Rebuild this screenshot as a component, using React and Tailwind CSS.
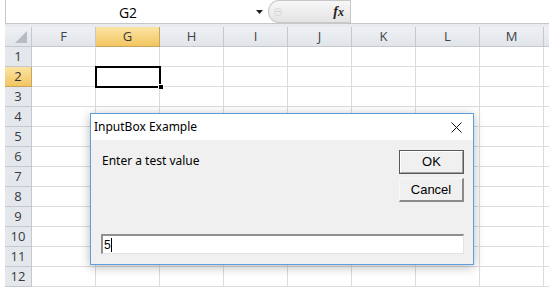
import React from "react";

const cols = ["F", "G", "H", "I", "J", "K", "L", "M", ""];
const rows = [1, 2, 3, 4, 5, 6, 7, 8, 9, 10, 11, 12];

function ColHeader({ label }) {
  const sel = label === "G";
  return (
    <div
      className={
        "w-[64px] shrink-0 h-full flex items-center justify-center border-r border-b text-[13px] " +
        (sel
          ? "bg-gradient-to-b from-[#fae4a3] to-[#f3c55f] border-[#c5a65c] text-[#3c3c3c]"
          : "bg-gradient-to-b from-[#eef0f3] to-[#e1e5ea] border-[#c5c9cf] text-[#3d434a]")
      }
    >
      {label}
    </div>
  );
}

function Row({ n }) {
  const sel = n === 2;
  return (
    <div className="flex h-[20px]">
      <div className="w-[5px] shrink-0" />
      <div
        className={
          "w-[27px] shrink-0 flex items-center justify-center border-r border-b text-[13px] " +
          (sel
            ? "bg-gradient-to-b from-[#fae4a3] to-[#f3c55f] border-[#c5a65c] text-[#333]"
            : "bg-[#e4e7eb] border-[#c5c9cf] text-[#353b42]")
        }
      >
        {n}
      </div>
      {cols.map((c, i) => (
        <div key={i} className="w-[64px] shrink-0 border-r border-b border-[#dadcdd]" />
      ))}
    </div>
  );
}

export default function App() {
  return (
    <div className="relative w-[549px] h-[289px] overflow-hidden bg-white font-['Open_Sans',sans-serif]">
      {/* top bar */}
      <div className="flex h-[23px]">
        <div className="w-[6px] shrink-0 border-r border-[#c6c6c6]" />
        <div className="w-[244px] shrink-0 flex items-center justify-center text-[14px] text-black pt-[1px]">
          G2
        </div>
        <div className="w-[18px] shrink-0 flex items-center justify-start pl-[6px]">
          <svg width="7" height="4" viewBox="0 0 7 4">
            <path d="M0 0 L7 0 L3.5 4 Z" fill="#222" />
          </svg>
        </div>
        <div className="w-[82px] shrink-0 flex items-center justify-between rounded-l-[11px] border border-r-0 border-[#c9c9c9] bg-gradient-to-b from-[#f7f7f7] to-[#e4e4e4] pl-[5px] pr-[6px]">
          <div className="w-[8px] h-[8px] rounded-full border border-[#d8d8d8] flex items-center justify-center">
            <div className="w-[4px] h-[1px] bg-[#d0d0d0]" />
          </div>
          <span className="font-['Liberation_Serif',serif] italic font-bold text-[14px] text-[#222] leading-none">
            f<span className="text-[12px]">x</span>
          </span>
        </div>
        <div className="flex-1 border-l border-[#c6c6c6]" />
      </div>
      <div className="ml-[5px] h-[1px] bg-[#c3c6ca]" />
      <div className="ml-[5px] h-[3px] bg-[#e8eaed]" />
      {/* header */}
      <div className="flex h-[20px]">
        <div className="w-[5px] shrink-0" />
        <div className="w-[27px] shrink-0 relative border-r border-b border-[#c5c9cf] bg-gradient-to-b from-[#eef0f3] to-[#e1e5ea] flex items-end justify-end pr-[4px] pb-[3px]">
          <svg width="12" height="12" viewBox="0 0 12 12">
            <path d="M12 0 L12 12 L0 12 Z" fill="#b8bcc2" />
          </svg>
        </div>
        {cols.map((c, i) => (
          <ColHeader key={i} label={c} />
        ))}
      </div>
      {rows.map((n) => (
        <Row key={n} n={n} />
      ))}

      {/* selected cell */}
      <div className="absolute left-[95px] top-[66px] w-[66px] h-[22px] border-2 border-black" />
      <div className="absolute left-[158px] top-[84px] w-[6px] h-[6px] bg-black border border-white" />

      {/* dialog */}
      <div className="absolute left-[90px] top-[113px] w-[384px] h-[152px] border border-[#5f9fd9] bg-[#f0f0f0] shadow-[0_2px_10px_rgba(0,0,0,0.28)] flex flex-col">
        <div className="h-[26px] shrink-0 bg-white flex items-center justify-between pl-[3px] pr-[11px]">
          <span className="text-[12px] text-black font-['Noto_Sans',sans-serif]">InputBox Example</span>
          <svg width="11" height="11" viewBox="0 0 11 11">
            <path d="M0.5 0.5 L10.5 10.5 M10.5 0.5 L0.5 10.5" stroke="#111" strokeWidth="1" />
          </svg>
        </div>
        <div className="flex-1 flex flex-col pl-[10px] pr-[9px] pt-[10px] pb-[10px] font-['Liberation_Sans',sans-serif] text-[12px] text-black">
          <div className="flex justify-between">
            <div className="pt-[2px] pl-[1px] text-[12px] font-['Noto_Sans',sans-serif]">Enter a test value</div>
            <div className="flex flex-col gap-[4px]">
              <div className="w-[65px] h-[24px] border border-[#5a5a5a] bg-[#f0f0f0]">
                <div className="w-full h-full flex items-center justify-center border-t border-l border-white border-r border-b border-r-[#a0a0a0] border-b-[#a0a0a0] text-[13px]">
                  OK
                </div>
              </div>
              <div className="w-[65px] h-[24px] flex items-center justify-center bg-[#f0f0f0] border-t border-l border-[#f8f8f8] border-r-2 border-b-2 border-r-[#8a8a8a] border-b-[#8a8a8a] text-[13px]">
                Cancel
              </div>
            </div>
          </div>
          <div className="mt-auto h-[20px] bg-white border-t-2 border-l-2 border-[#8f8f8f] border-r border-b border-r-[#e3e3e3] border-b-[#e3e3e3] flex items-center pl-[1px] text-[12px]">
            <span>5</span>
            <span className="w-[1px] h-[14px] bg-black" />
          </div>
        </div>
      </div>
    </div>
  );
}
